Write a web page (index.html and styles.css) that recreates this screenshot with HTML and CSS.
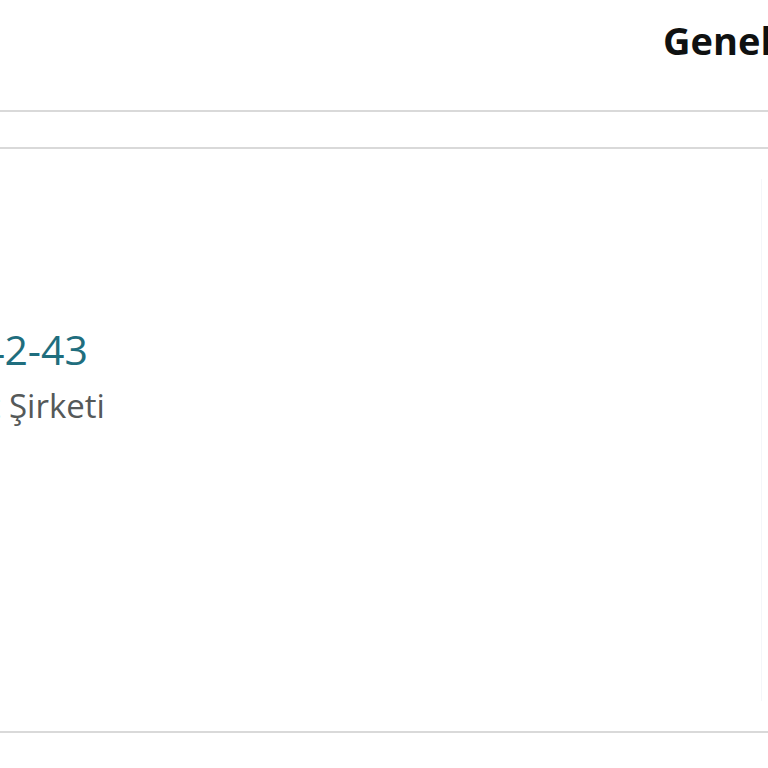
FILE: index.html
```html
<!DOCTYPE html>
<html lang="tr">
<head>
<meta charset="utf-8">
<link rel="stylesheet" href="styles.css">
</head>
<body>
<div class="page">
  <header class="top">
    <h1 class="title">Genel Bakış</h1>
  </header>
  <div class="band"></div>
  <section class="card">
    <div class="info">
      <div class="phone">0212-42-43</div>
      <div class="company">Ticaret Şirketi</div>
    </div>
    <div class="edge"></div>
  </section>
  <div class="foot"></div>
</div>
</body>
</html>
```

FILE: styles.css
```css
html, body {
  margin: 0;
  padding: 0;
  background: #ffffff;
}
.page {
  width: 768px;
  height: 768px;
  overflow: hidden;
  font-family: "Open Sans", "Liberation Sans", sans-serif;
  display: flex;
  flex-direction: column;
}
.top {
  height: 110px;
  border-bottom: 2px solid #d9d9d9;
  box-sizing: content-box;
  display: flex;
  align-items: flex-start;
  padding-left: 663px;
  white-space: nowrap;
}
.title {
  margin: 14px 0 0 0;
  font-size: 38px;
  font-weight: 700;
  color: #0f1111;
  line-height: 52px;
}
.band {
  height: 35px;
  border-bottom: 2px solid #d9d9d9;
}
.card {
  height: 582px;
  border-bottom: 2px solid #d9d9d9;
  display: flex;
  justify-content: space-between;
}
.info {
  padding-top: 174px;
  white-space: nowrap;
}
.phone {
  font-size: 41px;
  line-height: 52px;
  color: #1f6e7e;
  margin-left: -126px;
}
.company {
  font-size: 33px;
  line-height: 40px;
  color: #555959;
  margin-left: -104px;
  margin-top: 11px;
}
.edge {
  width: 1px;
  margin: 30px 6px 30px 0;
  background: #f4f6f9;
}
```
